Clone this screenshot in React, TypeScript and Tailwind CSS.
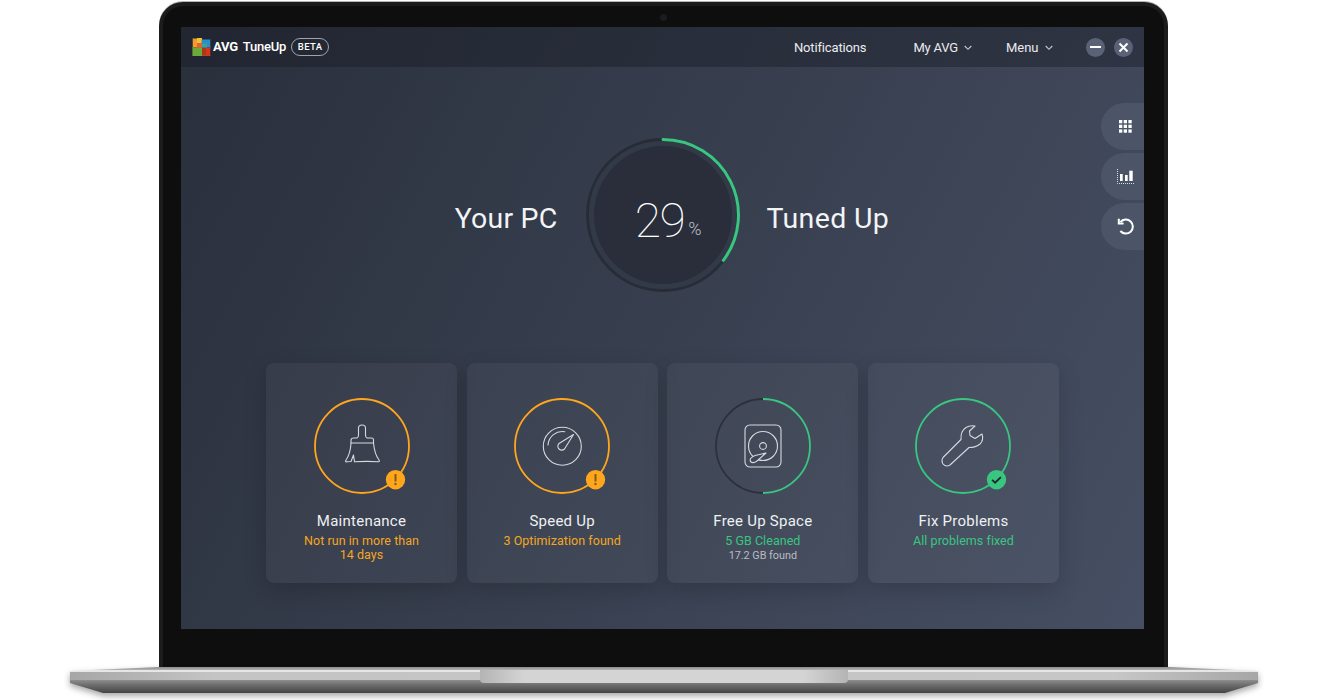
import React from "react";

const ORANGE = "#ffa61c";
const GREEN = "#39c681";

function Ring({ color, half, children, badge }: { color: string; half?: boolean; children: React.ReactNode; badge: "warn" | "ok" | "none" }) {
  return (
    <svg width="100" height="100" viewBox="-50 -50 100 100" fill="none" className="block mx-auto overflow-visible">
      {half ? (
        <>
          <path d="M0 -47 A47 47 0 0 0 0 47" stroke="#2c303c" strokeWidth="1.8" />
          <path d="M0 -47 A47 47 0 0 1 0 47" stroke={color} strokeWidth="1.8" />
        </>
      ) : (
        <circle r="47" stroke={color} strokeWidth="1.8" />
      )}
      <g stroke="#d6d9de" strokeWidth="1.1" strokeLinejoin="round" strokeLinecap="round">{children}</g>
      {badge === "warn" && (
        <g transform="translate(33.5 33.7)">
          <circle r="9.7" fill={ORANGE} />
          <rect x="-1" y="-5.6" width="2" height="7.4" fill="#7d5a1c" />
          <rect x="-1" y="3.2" width="2" height="2.2" fill="#7d5a1c" />
        </g>
      )}
      {badge === "ok" && (
        <g transform="translate(33.5 33.7)">
          <circle r="9.7" fill={GREEN} />
          <path d="M-4.4 0.2 L-1.4 3 L4.4 -2.6" stroke="#1d2a2c" strokeWidth="1.9" fill="none" />
        </g>
      )}
    </svg>
  );
}

function Card({ title, lines, ring }: { title: string; lines: { t: string; c: string }[]; ring: React.ReactNode }) {
  return (
    <div className="h-[220px] rounded-[8px] bg-white/[0.04] shadow-[0_8px_22px_rgba(0,0,0,0.17)] pt-[33px] px-[20px] text-center">
      {ring}
      <div className="mt-[15px] text-[15px] leading-[20px] tracking-[0.25px] text-[#eef0f3]">{title}</div>
      <div className="mt-[3px]">
        {lines.map((l, i) => (
          <div key={i} className={l.c}>{l.t}</div>
        ))}
      </div>
    </div>
  );
}

function Logo() {
  return (
    <svg width="20" height="19" viewBox="0 0 20 19" className="block shrink-0">
      <rect x="0.5" y="0.5" width="9" height="9" fill="#f29b2e" />
      <rect x="5" y="0" width="5" height="5" fill="#f6c12f" />
      <rect x="9.5" y="1.5" width="9" height="8" fill="#2c8dc7" />
      <rect x="0" y="9.5" width="10" height="8.5" fill="#6aa93a" />
      <rect x="10" y="9.5" width="8.5" height="8.5" fill="#d5351c" />
      <rect x="10" y="5.5" width="5" height="4" fill="#2fa5a8" />
      <rect x="5" y="5" width="5" height="4.5" fill="#e8622c" />
      <rect x="10" y="10" width="4" height="7" fill="#a8381a" />
      <path d="M0 2H1M0 4H1M0 6H1M0 8H1M0 11H1M0 13H1M0 15H1M0 17H1M19 3H18M19 5H18M19 7H18M19 12H18M19 14H18M19 16H18" stroke="#1f2430" strokeWidth="0.8" />
    </svg>
  );
}

function Chev() {
  return (
    <svg width="8" height="6" viewBox="0 0 8 6" fill="none" className="block mt-[1px]">
      <path d="M0.7 1 L4 4.3 L7.3 1" stroke="#c6c9cf" strokeWidth="1.1" />
    </svg>
  );
}

const SUB = "text-[12.5px] leading-[14px] tracking-[0.05px]";

export default function App() {
  return (
    <div className="relative w-[1328px] h-[700px] overflow-hidden bg-white [font-family:Roboto,sans-serif]">
      <div className="ml-[159px] mt-[2px] w-[1009px] h-[665px] rounded-t-[24px] bg-[#1c1c1c] shadow-[0_-1px_0_#b5b5b5] p-[4px] pb-0 relative">
        <div className="absolute left-[501px] top-[12px] w-[7px] h-[7px] rounded-full bg-[#191c20]" />
        <div className="h-full rounded-t-[20px] bg-[#0e0e0e] pt-[21px] px-[18px]">
          <div className="relative w-[963px] h-[602px] bg-[linear-gradient(118deg,#292f3b_0%,#464f63_100%)] text-white">
            {/* header */}
            <div className="h-[40px] bg-[#161a22]/40 flex items-center pl-[11px] pr-[11px]">
              <Logo />
              <span className="ml-[1px] text-[13px] font-bold tracking-[-0.25px]">AVG</span>
              <span className="ml-[5px] text-[13px] font-medium tracking-[-0.2px]">TuneUp</span>
              <span className="ml-[5px] h-[18px] w-[38px] rounded-full border border-[#9ea3ad] text-[9.5px] font-medium tracking-[0.4px] flex items-center justify-center">BETA</span>
              <span className="ml-auto mt-[1px] text-[13px] tracking-[-0.15px] text-[#e9ebee]">Notifications</span>
              <span className="ml-[47px] mt-[1px] text-[13px] tracking-[-0.2px] text-[#e9ebee]">My AVG</span>
              <span className="ml-[6px]"><Chev /></span>
              <span className="ml-[34px] mt-[1px] text-[13px] text-[#e9ebee]">Menu</span>
              <span className="ml-[6px]"><Chev /></span>
              <span className="ml-[33px] w-[19px] h-[19px] rounded-full bg-[#596375] flex items-center justify-center">
                <span className="block w-[11px] h-[2px] bg-white" />
              </span>
              <span className="ml-[9.5px] w-[19px] h-[19px] rounded-full bg-[#596375] flex items-center justify-center">
                <svg width="11" height="11" viewBox="0 0 11 11"><path d="M1.5 1.5 L9.5 9.5 M9.5 1.5 L1.5 9.5" stroke="#fff" strokeWidth="2" /></svg>
              </span>
            </div>

            {/* side buttons */}
            <div className="absolute right-0 top-[76px] flex flex-col gap-[3px]">
              <div className="w-[43px] h-[47px] rounded-l-full bg-[#4b5567] flex items-center justify-center pl-[6px] pr-0">
                <svg width="13" height="13" viewBox="0 0 13 13" fill="#fff">
                  {[0, 4.7, 9.4].map((y) => [0, 4.7, 9.4].map((x) => <rect key={`${x}-${y}`} x={x} y={y} width="3.3" height="3.3" />))}
                </svg>
              </div>
              <div className="w-[43px] h-[47px] rounded-l-full bg-[#4b5567] flex items-center justify-center pl-[6px]">
                <svg width="17" height="15" viewBox="0 0 17 15" fill="none">
                  <path d="M0.5 0 V14.5 H17" stroke="#d8dbe0" strokeDasharray="1 1" />
                  <rect x="3" y="5" width="2.7" height="7" fill="#fff" />
                  <rect x="8" y="6" width="2.7" height="6" fill="#fff" />
                  <rect x="12.3" y="1.7" width="3.4" height="10.3" fill="#fff" />
                </svg>
              </div>
              <div className="w-[43px] h-[47px] rounded-l-full bg-[#4b5567] flex items-center justify-center pl-[6px]">
                <svg width="17" height="17" viewBox="0 0 17 17" fill="none" stroke="#fff" strokeWidth="2">
                  <path d="M3.4 4.2 A7 7 0 1 1 3.4 13" />
                  <path d="M1.8 0.8 V5.4 H6.6" />
                </svg>
              </div>
            </div>

            {/* hero */}
            <div className="pt-[71px] grid grid-cols-[1fr_154px_1fr] items-center gap-x-[28px]">
              <div className="justify-self-end text-[28.5px] leading-[34px] tracking-[0.2px] text-[#f3f4f6] mt-[8px]">Your PC</div>
              <div className="relative w-[154px] h-[154px] flex items-center justify-center">
                <svg width="154" height="154" viewBox="-77 -77 154 154" fill="none" className="absolute inset-0">
                  <circle r="75.5" fill="#323947" stroke="#272c38" strokeWidth="2.8" />
                  <circle r="69" fill="#292e3a" />
                  <path d="M0 -75.5 A75.5 75.5 0 0 1 60.3 45.4" stroke={GREEN} strokeWidth="3" strokeLinecap="round" />
                </svg>
                <span className="relative mt-[12px] mr-[6px] text-[48px] leading-[56px] font-thin text-white tracking-[-1.5px]">
                  29
                  <span className="absolute left-full ml-[4px] bottom-[10px] text-[18px] leading-[20px] font-light tracking-normal text-[#bcc0c8]">%</span>
                </span>
              </div>
              <div className="justify-self-start -ml-[1px] text-[28.5px] leading-[34px] tracking-[0.35px] text-[#f3f4f6] mt-[8px]">Tuned Up</div>
            </div>

            {/* cards */}
            <div className="mt-[71px] px-[85px] grid grid-cols-4 gap-x-[9.67px]">
              <Card
                title="Maintenance"
                lines={[{ t: "Not run in more than", c: `${SUB} text-[#f5a623]` }, { t: "14 days", c: `${SUB} text-[#f5a623]` }]}
                ring={
                  <Ring color={ORANGE} badge="warn">
                    <path d="M-11 -3 V-6 Q-11 -8 -8 -8 L-5 -8 Q-3.5 -8.5 -3.5 -11 V-18 Q-3.5 -21 0 -21 Q3.5 -21 3.5 -18 V-11 Q3.5 -8.5 5 -8 L9.5 -8 Q11.5 -8 11.5 -6 V-3 Z" />
                    <path d="M-11 -3 Q-11.5 8 -16.5 15 Q-16.5 16 -15 15.8 L-11 15.5 L-8.5 9 L-7.5 15.8 Q5 15 16.5 15.8 Q18 15.5 17 14 Q12.5 8 11.5 -3" />
                  </Ring>
                }
              />
              <Card
                title="Speed Up"
                lines={[{ t: "3 Optimization found", c: `${SUB} text-[#f5a623]` }]}
                ring={
                  <Ring color={ORANGE} badge="warn">
                    <circle cx="0.3" cy="0.2" r="19" />
                    <path d="M-14 -1 A14.3 14.3 0 0 1 2.8 -14.3" />
                    <path d="M11.5 -11.5 L-3 -2.5 A3.8 3.8 0 1 0 2.5 3 Z" />
                  </Ring>
                }
              />
              <Card
                title="Free Up Space"
                lines={[
                  { t: "5 GB Cleaned", c: `${SUB} text-[#39c681]` },
                  { t: "17.2 GB found", c: "text-[10.8px] leading-[14px] text-[#b9bcc4] mt-[1px]" },
                ]}
                ring={
                  <Ring color={GREEN} half badge="none">
                    <rect x="-18" y="-21" width="36" height="42" rx="5" />
                    <circle r="14.5" />
                    <circle r="3.4" />
                    <path d="M3 7 L-8 9.5 Q-14 12 -12.5 15.5 Q-10 18 -6 15 Z" fill="#3f4658" />
                  </Ring>
                }
              />
              <Card
                title="Fix Problems"
                lines={[{ t: "All problems fixed", c: `${SUB} text-[#39c681]` }]}
                ring={
                  <Ring color={GREEN} badge="ok">
                    <path d="M-20 11.5 L-2 -6.5 Q-2.5 -15 3 -18.5 Q7 -21 12 -20 L6.5 -15 L7 -10.5 L12 -7.5 L19 -12 Q21 -6 17 -2 Q13 1.5 6 1.5 L-13 19 Q-17 21.5 -20 18 Q-22 14.5 -20 11.5 Z" />
                  </Ring>
                }
              />
            </div>
          </div>
        </div>
      </div>

      {/* base */}
      <div className="ml-[70px] w-[1188px] drop-shadow-[0_3px_3px_rgba(0,0,0,0.35)]">
        <div className="relative h-[26px] [clip-path:polygon(0_4px,89px_0,1099px_0,1188px_4px,1188px_16px,1155px_26px,33px_26px,0_16px)] flex flex-col">
          <div className="h-[3px] bg-[linear-gradient(#8c8c8c,#b4b4b4)]" />
          <div className="h-[2px] bg-[#e6e6e6]" />
          <div className="h-[8px] bg-[linear-gradient(90deg,#a6a6a6,#c4c4c4_12%,#c6c6c6_88%,#a6a6a6)]" />
          <div className="flex-1 bg-[linear-gradient(#8e8e8e,#6c6c6c_40%,#444444)]" />
          <div className="absolute left-[410px] top-[3px] w-[368px] h-[13px] rounded-b-[4px] bg-[linear-gradient(90deg,#b4b4b4,#d4d4d4_12%,#d4d4d4_88%,#b4b4b4)]" />
        </div>
      </div>
    </div>
  );
}
